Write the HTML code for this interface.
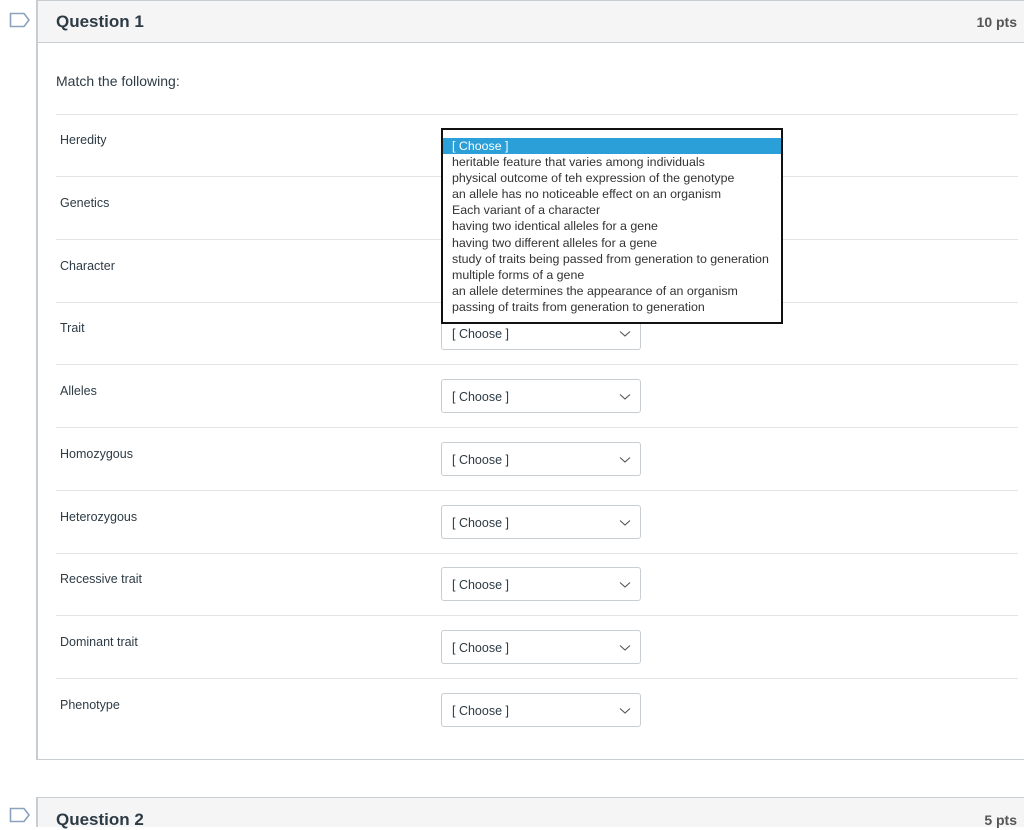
<!DOCTYPE html>
<html><head><style>
*{margin:0;padding:0;box-sizing:border-box}
body{width:1024px;height:818px;background:#fff;font-family:"Liberation Sans",sans-serif;color:#2d3b45;position:relative;overflow:hidden}
.abs{position:absolute}
.box{left:36px;width:990px;border-left:2px solid #c7cdd1;border-bottom:1px solid #c7cdd1;border-top:1px solid #c7cdd1}
.hdr{position:absolute;left:0;right:0;top:0;height:42px;background:#f5f5f5;border-bottom:1px solid #c7cdd1}
.line{position:absolute;left:56px;width:962px;height:1px;background:#e2e5e7}
.lab{position:absolute;left:60px;font-size:12.5px;color:#2d3b45}
.sel{position:absolute;left:441px;width:200px;height:34px;border:1px solid #c7cdd1;border-radius:3px;background:#fff;font-size:12.5px;padding:10px 0 0 10px}
.sel svg{position:absolute;right:9px;top:13px}
.dd{position:absolute;left:441px;top:128px;width:342px;height:196px;border:2px solid #111;background:#fff;font-size:12.4px;color:#333;padding-top:8px}
.dd div{height:16.1px;line-height:16px;padding-left:9px;white-space:nowrap}
.dd .hi{background:#2a9fd8;color:#fff}
</style></head><body>
<svg class="abs" style="left:9px;top:12px" width="22" height="16"><path d="M1.5 1.5H15L20 8L15 14.5H1.5Z" fill="none" stroke="#8aa2bd" stroke-width="1.6"/></svg>
<div class="abs box" style="top:0;height:760px">
 <div class="hdr"></div>
</div>
<div class="abs" style="left:56px;top:12px;font-size:17px;font-weight:bold;color:#2d3b45">Question 1</div>
<div class="abs" style="right:7px;top:14px;font-size:14px;font-weight:bold;color:#555">10 pts</div>
<div class="abs" style="left:56px;top:73px;font-size:14px">Match the following:</div>
<div class="line" style="top:114px"></div>
<div class="line" style="top:176px"></div>
<div class="line" style="top:239px"></div>
<div class="line" style="top:302px"></div>
<div class="line" style="top:364px"></div>
<div class="line" style="top:427px"></div>
<div class="line" style="top:490px"></div>
<div class="line" style="top:553px"></div>
<div class="line" style="top:615px"></div>
<div class="line" style="top:678px"></div>
<div class="lab" style="top:133px">Heredity</div>
<div class="lab" style="top:196px">Genetics</div>
<div class="lab" style="top:259px">Character</div>
<div class="lab" style="top:321px">Trait</div>
<div class="lab" style="top:384px">Alleles</div>
<div class="lab" style="top:447px">Homozygous</div>
<div class="lab" style="top:510px">Heterozygous</div>
<div class="lab" style="top:572px">Recessive trait</div>
<div class="lab" style="top:635px">Dominant trait</div>
<div class="lab" style="top:698px">Phenotype</div>
<div class="sel" style="top:191px">[ Choose ]</div>
<div class="sel" style="top:254px">[ Choose ]</div>
<div class="sel" style="top:316px">[ Choose ]<svg width="12" height="8"><path d="M1 1.5L6 6L11 1.5" fill="none" stroke="#555" stroke-width="1.1"/></svg></div>
<div class="sel" style="top:379px">[ Choose ]<svg width="12" height="8"><path d="M1 1.5L6 6L11 1.5" fill="none" stroke="#555" stroke-width="1.1"/></svg></div>
<div class="sel" style="top:442px">[ Choose ]<svg width="12" height="8"><path d="M1 1.5L6 6L11 1.5" fill="none" stroke="#555" stroke-width="1.1"/></svg></div>
<div class="sel" style="top:505px">[ Choose ]<svg width="12" height="8"><path d="M1 1.5L6 6L11 1.5" fill="none" stroke="#555" stroke-width="1.1"/></svg></div>
<div class="sel" style="top:567px">[ Choose ]<svg width="12" height="8"><path d="M1 1.5L6 6L11 1.5" fill="none" stroke="#555" stroke-width="1.1"/></svg></div>
<div class="sel" style="top:630px">[ Choose ]<svg width="12" height="8"><path d="M1 1.5L6 6L11 1.5" fill="none" stroke="#555" stroke-width="1.1"/></svg></div>
<div class="sel" style="top:693px">[ Choose ]<svg width="12" height="8"><path d="M1 1.5L6 6L11 1.5" fill="none" stroke="#555" stroke-width="1.1"/></svg></div>
<div class="dd">
<div class="hi">[ Choose ]</div>
<div>heritable feature that varies among individuals</div>
<div>physical outcome of teh expression of the genotype</div>
<div>an allele has no noticeable effect on an organism</div>
<div>Each variant of a character</div>
<div>having two identical alleles for a gene</div>
<div>having two different alleles for a gene</div>
<div>study of traits being passed from generation to generation</div>
<div>multiple forms of a gene</div>
<div>an allele determines the appearance of an organism</div>
<div>passing of traits from generation to generation</div>
</div>
<div class="abs" style="left:36px;top:797px;width:990px;height:30px;background:#f5f5f5;border-top:1px solid #c7cdd1;border-left:2px solid #c7cdd1"></div>
<svg class="abs" style="left:9px;top:807px" width="22" height="16"><path d="M1.5 1.5H15L20 8L15 14.5H1.5Z" fill="none" stroke="#8aa2bd" stroke-width="1.6"/></svg>
<div class="abs" style="left:56px;top:810px;font-size:17px;font-weight:bold">Question 2</div>
<div class="abs" style="right:7px;top:812px;font-size:14px;font-weight:bold;color:#555">5 pts</div>
</body></html>
